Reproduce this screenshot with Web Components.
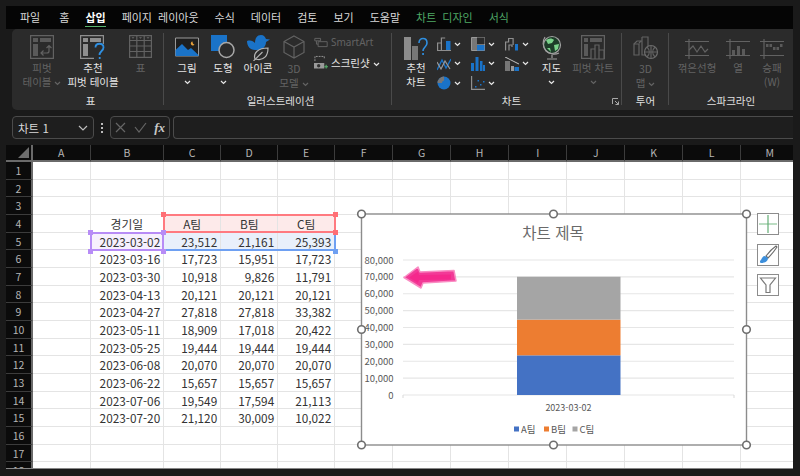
<!DOCTYPE html>
<html lang="ko">
<head>
<meta charset="utf-8">
<title>Excel</title>
<style>
  html, body { margin: 0; height: 100%; background: #1a1a1a; overflow: hidden; }
  body { font-family: "Noto Sans CJK KR", "Noto Sans", sans-serif; padding-top: 6px; box-sizing: border-box; }
  svg { display: block; }
  .g { fill: none; stroke: #8f8f8f; stroke-width: 1.2; }
  .d { fill: none; stroke: #626262; stroke-width: 1.2; }
  .df { fill: #5a5a5a; }
  .gf { fill: #8f8f8f; }
  .b { fill: #1a73c8; }
</style>
</head>
<body>

<template id="tab-tpl">
  <style>
    :host { display: block; padding: 0 8px; height: 23px; position: relative; font-size: 11px; word-spacing: 3px; line-height: 22px; color: #d9d9d9; white-space: nowrap; }
    :host([active]) { color: #fff; font-weight: 700; }
    :host([active])::after { content: ""; position: absolute; left: 8px; right: 8px; bottom: 2px; height: 1.5px; background: #57b26c; }
    :host([context]) { color: #4fa866; }
  </style>
  <slot></slot>
</template>

<template id="menubar-tpl">
  <style>
    :host { display: flex; background: #050505; height: 23px; margin: 0 7px 0 6px; padding-left: 6px; }
  </style>
  <slot></slot>
</template>

<template id="ribbon-tpl">
  <style>
    :host { display: flex; height: 81px; margin: 0 7px 0 12px; background: #2b2b2b; border-radius: 5px 0 0 5px; overflow: hidden; }
  </style>
  <slot></slot>
</template>

<template id="group-tpl">
  <style>
    :host { display: block; position: relative; flex: none; box-sizing: border-box; }
    :host::after { content: ""; position: absolute; right: 0; top: 4px; bottom: 5px; width: 1px; background: #4a4a4a; }
    :host([last])::after { display: none; }
    .tools { display: flex; height: 65px; padding-top: 6px; box-sizing: border-box; }
    .label { text-align: center; font-size: 10.5px; line-height: 14px; color: #e0e0e0; height: 16px; }
    .launcher { position: absolute; right: 3px; bottom: 4px; }
  </style>
  <div class="tools"><slot></slot></div>
  <div class="label"></div>
  <slot name="launcher"></slot>
</template>

<template id="tool-tpl">
  <style>
    :host { display: flex; flex-direction: column; align-items: center; flex: none; font-size: 10.5px; line-height: 14px; color: #e6e6e6; text-align: center; white-space: nowrap; }
    :host([off]) { color: #636363; }
    .icon { height: 26px; display: flex; align-items: flex-start; justify-content: center; }
  </style>
  <div class="icon"><slot name="icon"></slot></div>
  <slot></slot>
</template>

<template id="mini-tpl">
  <style>
    :host { display: flex; align-items: center; gap: 3px; height: 20px; font-size: 10.5px; white-space: nowrap; color: #e6e6e6; }
    :host([off]) { color: #636363; }
  </style>
  <slot></slot>
</template>

<template id="formula-tpl">
  <style>
    :host { display: flex; align-items: center; height: 23px; margin: 6px 7px 6px 12px; color: #d9d9d9; }
    .box { box-sizing: border-box; height: 23px; background: #1e1e1e; border: 1px solid #4b4b4b; border-radius: 4px; display: flex; align-items: center; }
    .name { width: 82px; padding: 0 5px 0 5px; justify-content: space-between; font-size: 11.5px; }
    .dots { width: 16px; display: flex; flex-direction: column; align-items: center; gap: 2px; }
    .dots i { width: 2px; height: 2px; background: #bbb; display: block; }
    .btns { width: 60px; padding: 0 4px; justify-content: space-between; }
    .input { flex: 1; margin-left: 3px; border-radius: 4px 0 0 4px; border-right: 0; }
    .fx { font: italic 700 13px "Liberation Serif", serif; color: #c8c8c8; }
  </style>
  <div class="box name"><span>차트 1</span>
    <svg width="10" height="6" viewBox="0 0 10 6"><path d="M1 1l4 4 4-4" fill="none" stroke="#bdbdbd" stroke-width="1.2"/></svg>
  </div>
  <div class="dots"><i></i><i></i><i></i></div>
  <div class="box btns">
    <svg width="11" height="11" viewBox="0 0 11 11"><path d="M1 1l9 9M10 1l-9 9" stroke="#666" stroke-width="1.2"/></svg>
    <svg width="13" height="11" viewBox="0 0 13 11"><path d="M1 5l4 5 7-9" fill="none" stroke="#666" stroke-width="1.2"/></svg>
    <span class="fx">fx</span>
  </div>
  <div class="box input"></div>
</template>

<template id="sheet-tpl">
  <style>
    :host { display: block; position: relative; margin-left: 6px; width: 787px; height: 324px; background: #fff; overflow: hidden; font-size: 11.8px; color: #333; }
    .grid { display: grid; grid-template-columns: 27px 57.6px 73.6px 57px 57px 57px 58px 58px 58px 58px 58px 58px 58px 58px; grid-template-rows: 17px repeat(18, 17.67px); }
    .c { box-sizing: border-box; border-right: 1px solid #e4e4e4; border-bottom: 1px solid #e4e4e4; line-height: 17px; white-space: nowrap; overflow: hidden; }
    .num { text-align: right; padding-right: 3px; }
    .mid { text-align: center; }
    .ch, .rh { background: #0b0b0b; color: #b5b5b5; font-size: 10.5px; text-align: center; box-sizing: border-box; }
    .ch { line-height: 15px; border-right: 1px solid #3c3c3c; border-bottom: 2px solid #6a6a6a; }
    .rh { line-height: 17px; border-bottom: 1px solid #3c3c3c; border-right: 2px solid #6a6a6a; }
    .corner { background: #0b0b0b; border-bottom: 2px solid #6a6a6a; border-right: 2px solid #6a6a6a; box-sizing: border-box; position: relative; }
    .corner::after { content: ""; position: absolute; right: 2px; bottom: 2px; border-style: solid; border-width: 0 0 11px 11px; border-color: transparent transparent #6e6e6e transparent; }
    .red { background: #fdeaea; }
    .blue { background: #e9f0fb; }
    .purple { background: #f6f0fd; }
    .sel { position: absolute; box-sizing: border-box; pointer-events: none; }
    .h { position: absolute; width: 5px; height: 5px; }
    .bottom-edge { position: absolute; left: 0; right: 0; bottom: 0; height: 1px; background: #888; }
  </style>
  <div class="grid"></div>
  <div class="sel" style="left:157px;top:69px;width:173px;height:19px;border:2px solid #ff7a80"></div>
  <div class="sel" style="left:157px;top:87.5px;width:173px;height:18.5px;border-right:2px solid #6ea0f2;border-bottom:2px solid #6ea0f2"></div>
  <div class="sel" style="left:84px;top:87px;width:74px;height:19px;border:2px solid #b78cf6"></div>
  <div class="h" style="left:155px;top:67px;background:#ff6f75"></div>
  <div class="h" style="left:327px;top:67px;background:#ff6f75"></div>
  <div class="h" style="left:327px;top:85px;background:#ff6f75"></div>
  <div class="h" style="left:327px;top:103.5px;background:#6ea0f2"></div>
  <div class="h" style="left:82px;top:85px;background:#b78cf6"></div>
  <div class="h" style="left:155px;top:85px;background:#b78cf6"></div>
  <div class="h" style="left:82px;top:103.5px;background:#b78cf6"></div>
  <div class="h" style="left:155px;top:103.5px;background:#b78cf6"></div>
  <slot></slot>
  <div class="bottom-edge"></div>
</template>

<template id="chart-tpl">
  <style>
    :host { display: block; position: absolute; left: 346px; top: 61px; width: 430px; height: 245px; }
    .side { position: absolute; left: 405px; width: 22px; height: 22px; box-sizing: border-box; background: #fff; border: 1.5px solid #8c8c8c; display: flex; align-items: center; justify-content: center; }
    text { font-family: "Noto Sans CJK KR", "Noto Sans", sans-serif; }
  </style>
  <svg width="400" height="245" viewBox="352 206 400 245" style="position:absolute;left:0;top:0"></svg>
  <div class="side" style="top:7px"><svg width="18" height="18" viewBox="0 0 18 18"><path d="M0 9h18" stroke="#8fc79b" stroke-width="1.2"/><path d="M9 0v18" stroke="#63ad75" stroke-width="1.2"/></svg></div>
  <div class="side" style="top:38px"><svg width="20" height="20" viewBox="0 0 20 20"><path d="M18 1c-3 2-7 6-10 10l2 2c3-3 7-8 9-11z" fill="#fff" stroke="#6b6b6b" stroke-width="1.1"/><path d="M7 11c-3 0-3 3-5 5 0 1 0 2 1 2 3 0 7-1 7-5z" fill="#3c8fdc"/></svg></div>
  <div class="side" style="top:68px"><svg width="18" height="18" viewBox="0 0 18 18"><path d="M1.5 2h15l-5.500 7v7.500h-4V9z" fill="#fff" stroke="#7a7a7a" stroke-width="1.2"/></svg></div>
</template>

<svg width="0" height="0" style="position:absolute">
  <defs>
    <symbol id="chev" viewBox="0 0 7 5"><path d="M1 1l2.500 2.500L6 1" fill="none" stroke="currentColor" stroke-width="1.200"/></symbol>
  </defs>
</svg>

<xl-menubar>
  <xl-tab>파일</xl-tab><xl-tab style="margin-left:3px">홈</xl-tab><xl-tab active>삽입</xl-tab><xl-tab>페이지 레이아웃</xl-tab><xl-tab>수식</xl-tab><xl-tab>데이터</xl-tab><xl-tab>검토</xl-tab><xl-tab>보기</xl-tab><xl-tab>도움말</xl-tab><xl-tab context>차트 디자인</xl-tab><xl-tab context>서식</xl-tab>
</xl-menubar>

<xl-ribbon>
  <xl-group label="표" style="width:152px;padding-left:5px">
    <xl-tool off style="width:50px">
      <svg slot="icon" width="24" height="24" viewBox="0 0 24 24"><path class="d" d="M.6.6h22.800v22.800H.6z"/><path class="df" d="M3 3h5v4H3zM10 3h11v4H10zM3 9h5v12H3z"/><path class="d" d="M11 18h6a2 2 0 0 0 2-2v-5M16.500 13l2.500-2.500 2.500 2.500M13.500 15.500L11 18l2.500 2.500"/></svg>
      <span>피벗</span><span>테이블 <svg width="7" height="5" style="display:inline"><use href="#chev"/></svg></span>
    </xl-tool>
    <xl-tool style="width:52px">
      <svg slot="icon" width="26" height="26" viewBox="0 0 26 26"><path class="g" d="M.6.6h22.800v22.800H.6z"/><path class="gf" d="M3 3h5v4H3zM10 3h11v4H10zM3 9h5v12H3z"/><path fill="#2b2b2b" d="M14 9h12v17H14z"/><path d="M15.500 12.500c0-5 8-5 8 0 0 3.500-4 3.500-4 7.500" fill="none" stroke="#2f8fe0" stroke-width="1.800"/><path d="M18.800 22h1.800v2h-1.800z" fill="#2f8fe0"/></svg>
      <span>추천</span><span>피벗 테이블</span>
    </xl-tool>
    <xl-tool off style="width:43px">
      <svg slot="icon" width="23" height="23" viewBox="0 0 23 23"><path class="d" d="M.6.6h21.800v21.800H.6zM.6 5.500h21.800M.6 11h21.800M.6 16.500h21.800M7.800.6v21.800M15.200.6v21.800"/><path class="df" d="M2.500 2h3l-1.500 2zM10 2h3l-1.500 2zM17.500 2h3L19 4z"/></svg>
      <span>표</span>
    </xl-tool>
  </xl-group>

  <xl-group label="일러스트레이션" style="width:228px;padding-left:5px">
    <xl-tool style="width:36px">
      <svg slot="icon" width="24" height="22" viewBox="0 0 24 22" style="margin-top:2px"><path d="M.5 1h23v18H.5z" fill="#1e1e1e" stroke="#9a9a9a"/><path d="M.5 19V13L7 7l6 6 3-2 7.500 7v1z" fill="#1a73c8"/><path d="M17.500 4.500a2 2 0 1 0 2 3c-1 .1-2-1-2-3z" fill="#e8a13a"/></svg>
      <span>그림</span><svg width="7" height="5" style="margin-top:5px"><use href="#chev"/></svg>
    </xl-tool>
    <xl-tool style="width:36px">
      <svg slot="icon" width="24" height="24" viewBox="0 0 24 24"><path d="M0 0h16v16H0z" fill="#1a73c8"/><circle cx="15.500" cy="15" r="7.500" fill="#2b2b2b" stroke="#a8a8a8" stroke-width="1.500"/></svg>
      <span>도형</span><svg width="7" height="5" style="margin-top:5px"><use href="#chev"/></svg>
    </xl-tool>
    <xl-tool style="width:34px">
      <svg slot="icon" width="23" height="26" viewBox="0 0 23 26"><path d="M0 6c4-1 6 0 8 2 0-5 2-8 6-8 3 0 4 2 5 4l4 .5-4 2.500c0 4-3 8-8 8H8C3 15 0 11 0 6z" fill="#1a73c8"/><path d="M8 24c-2-6 3-11 13-11 0 8-4 12-10 11.500L8 24z" fill="#2b2b2b" stroke="#b5b5b5" stroke-width="1.200"/><path d="M6.500 26l9-9" stroke="#b5b5b5" stroke-width="1.100"/></svg>
      <span>아이콘</span>
    </xl-tool>
    <xl-tool off style="width:38px">
      <svg slot="icon" width="22" height="24" viewBox="0 0 22 24"><path class="d" d="M11 1l10 5.500v11L11 23 1 17.500v-11zM1 6.500L11 12l10-5.500M11 12v11"/></svg>
      <span style="margin-top:1px">3D</span><span>모델 <svg width="7" height="5" style="display:inline"><use href="#chev"/></svg></span>
    </xl-tool>
    <div style="padding-left:1px;margin-top:-3px">
      <xl-mini off>
        <svg width="14" height="11" viewBox="0 0 17 12"><path class="d" d="M5 5h11v6H5zM1 1h7v3H1zM3 4v4h2"/></svg>
        <span style="font-family:'Noto Sans',sans-serif;font-size:10px">SmartArt</span>
      </xl-mini>
      <xl-mini>
        <svg width="14" height="15" viewBox="0 0 15 15"><path d="M1 6V1h10v3" fill="none" stroke="#9a9a9a" stroke-dasharray="2 1"/><path d="M0 8h11v6H0z" fill="#9a9a9a"/><circle cx="5" cy="11" r="1.800" fill="#333"/><path d="M11 12h4M13 10v4" stroke="#57b26c" stroke-width="1.200"/></svg>
        <span>스크린샷 <svg width="7" height="5" style="display:inline"><use href="#chev"/></svg></span>
      </xl-mini>
    </div>
  </xl-group>

  <xl-group label="차트" style="width:230px;padding-left:9px">
    <xl-tool style="width:30px">
      <svg slot="icon" width="24" height="25" viewBox="0 0 24 25"><path d="M0 2h7v23H0z" fill="#8c8c8c"/><path d="M8 11h6v14H8z" fill="#777"/><path d="M15 7c0-6 8-6 8 0 0 4-4 4-4 8" fill="none" stroke="#2f8fe0" stroke-width="1.600" transform="translate(0 1)"/><path d="M18.200 18h1.700v2h-1.700z" fill="#2f8fe0"/></svg>
      <span>추천</span><span>차트</span>
    </xl-tool>
    <div style="display:grid;grid-template-columns:34px 34px 30px;grid-auto-rows:19.500px;width:98px;padding-left:6px;margin-top:-1px;color:#d0d0d0">
      <xl-mini><svg width="14" height="14" viewBox="0 0 14 14"><path class="g" d="M.6 13.400V6h3.800v7.400M4.400 13.400V1h3.800"/><path d="M9 4h4.500v9.500H9z" fill="#1a73c8"/><path class="g" d="M0 13.500h14"/></svg><svg width="7" height="5"><use href="#chev"/></svg></xl-mini>
      <xl-mini><svg width="14" height="14" viewBox="0 0 14 14"><path d="M.5.500h13v13H.5z" fill="#777" stroke="#999"/><path d="M6 .5h7.500V7H6z" fill="#2b2b2b"/><path d="M6 8h7.500v5.500H6z" fill="#1a73c8"/></svg><svg width="7" height="5"><use href="#chev"/></svg></xl-mini>
      <xl-mini><svg width="14" height="14" viewBox="0 0 14 14"><path class="g" d="M.6 13.500V5h3V1.500h4.500V8"/><path d="M10 7h3v6.500h-3z" fill="#1a73c8"/><path class="g" d="M4 13.500V8h3v2"/></svg><svg width="7" height="5"><use href="#chev"/></svg></xl-mini>
      <xl-mini><svg width="14" height="14" viewBox="0 0 14 14"><path d="M0 13L5 3l4 8 5-9" fill="none" stroke="#1a73c8" stroke-width="1.400"/><path d="M0 5l4 7 4-8 5 8" fill="none" stroke="#999" stroke-width="1.200"/></svg><svg width="7" height="5"><use href="#chev"/></svg></xl-mini>
      <xl-mini><svg width="14" height="15" viewBox="0 0 14 15"><path d="M0 7h3v8H0zM4.500 1h3v14h-3zM9 5h2.500v10H9zM12 9h2v6h-2z" fill="#1a73c8"/></svg><svg width="7" height="5"><use href="#chev"/></svg></xl-mini>
      <xl-mini><svg width="14" height="14" viewBox="0 0 14 14"><path d="M0 4h5v10H0z" fill="#777"/><path d="M6 9h3v5H6z" fill="#999"/><path d="M9.500 10H14v4H9.500z" fill="#1a73c8"/><path d="M0 0l14 7" stroke="#bbb" stroke-width="1.100"/></svg><svg width="7" height="5"><use href="#chev"/></svg></xl-mini>
      <xl-mini><svg width="14" height="14" viewBox="0 0 14 14"><circle cx="7" cy="7" r="6.500" fill="#1a73c8"/><path d="M7 7V.5A6.500 6.500 0 0 0 .5 7z" fill="#777"/><circle cx="7.500" cy="7" r="2.500" fill="#1a73c8"/></svg><svg width="7" height="5"><use href="#chev"/></svg></xl-mini>
      <xl-mini><svg width="14" height="14" viewBox="0 0 14 14"><path class="g" d="M.6 0v13.400H14"/><path d="M4 10h1.500v1.500H4zM6.500 4H8v1.500H6.500zM9 8h1.500v1.500H9zM12 5h1.500v1.500H12z" fill="#1a73c8"/></svg><svg width="7" height="5"><use href="#chev"/></svg></xl-mini>
    </div>
    <xl-tool style="width:35px;margin-left:-1px">
      <svg slot="icon" width="22" height="25" viewBox="0 0 22 25"><circle cx="11" cy="10" r="8.500" fill="#1d3d29" stroke="#a0a0a0" stroke-width="1.200"/><path d="M5 5c3-2 6-2 8 0l-2 3-4 1zM13 10l5-1-1 5-3 2zM6 13l3 0 1 4z" fill="#7bd38b"/><path d="M4 2a11 11 0 0 0 14 16M11 20v3M6 24h10" fill="none" stroke="#a0a0a0" stroke-width="1.200"/></svg>
      <span>지도</span><svg width="7" height="5" style="margin-top:5px"><use href="#chev"/></svg>
    </xl-tool>
    <xl-tool off style="width:48px">
      <svg slot="icon" width="25" height="25" viewBox="0 0 25 25"><path class="d" d="M.6.600h22.800v22.800H.6z"/><path class="df" d="M3 3h4v4H3zM9 3h12v4H9zM3 9h4v12H3z"/><path d="M10 14h4v10h-4zM14 10h4v14h-4zM18 15h5v9h-5z" fill="#2b2b2b" stroke="#626262" stroke-width="1.200"/></svg>
      <span>피벗 차트</span><svg width="7" height="5" style="margin-top:5px"><use href="#chev"/></svg>
    </xl-tool>
    <svg slot="launcher" class="launcher" width="7" height="7" viewBox="0 0 7 7" style="position:absolute;right:3px;bottom:5px"><path d="M.5 6V.500H6M3 3l3.500 3.500M6.500 3.500v3h-3" fill="none" stroke="#a8a8a8"/></svg>
  </xl-group>

  <xl-group label="투어" style="width:47px">
    <xl-tool off style="width:47px">
      <svg slot="icon" width="26" height="25" viewBox="0 0 26 25"><path class="d" d="M1 9h5v11H1zM6 8l2-2M9 2h6v13M9 2v18h3"/><path d="M6 6h3M1 9l3-3h3" class="d"/><circle cx="18" cy="17" r="6.500" fill="#2b2b2b" stroke="#6e6e6e" stroke-width="1.200"/><path class="d" d="M11.500 17h13M18 10.500v13M14 12c3 3 3 7 0 10M22 12c-3 3-3 7 0 10"/></svg>
      <span style="margin-top:1px">3D</span><span>맵 <svg width="7" height="5" style="display:inline"><use href="#chev"/></svg></span>
    </xl-tool>
  </xl-group>

  <xl-group label="스파크라인" last style="flex:1">
    <xl-tool off style="width:56px">
      <svg slot="icon" width="24" height="20" viewBox="0 0 24 20" style="margin-top:4px"><path class="d" d="M0 2.500h24M0 16.500h24M4 0v20"/><path class="d" d="M4 11l4-4 4 6 4-6 4 6 3-3"/></svg>
      <span>꺾은선형</span>
    </xl-tool>
    <xl-tool off style="width:26px">
      <svg slot="icon" width="24" height="20" viewBox="0 0 24 20" style="margin-top:4px"><path class="d" d="M0 2.500h24M0 16.500h24M4 0v20"/><path class="df" d="M6 11h3v5H6zM11 7h3v9h-3zM16 10h3v6h-3z"/></svg>
      <span>열</span>
    </xl-tool>
    <xl-tool off style="width:42px">
      <svg slot="icon" width="24" height="20" viewBox="0 0 24 20" style="margin-top:4px"><path class="d" d="M0 2.500h24M0 16.500h24M4 0v20"/><path class="df" d="M6 5h2.500v3H6zM9.500 5H12v3H9.500zM13 8h2.500v3H13zM16.500 8H19v3h-2.500zM20 5h2.500v3H20z"/></svg>
      <span>승패</span><span>(W)</span>
    </xl-tool>
  </xl-group>
</xl-ribbon>

<xl-formula></xl-formula>

<xl-sheet>
  <xl-chart></xl-chart>
</xl-sheet>

<script>
class Base extends HTMLElement {
  constructor(tplId) {
    super();
    this.attachShadow({ mode: 'open' });
    this.shadowRoot.appendChild(document.getElementById(tplId).content.cloneNode(true));
  }
}

customElements.define('xl-tab', class extends Base { constructor() { super('tab-tpl'); } });
customElements.define('xl-menubar', class extends Base { constructor() { super('menubar-tpl'); } });
customElements.define('xl-ribbon', class extends Base { constructor() { super('ribbon-tpl'); } });
customElements.define('xl-tool', class extends Base { constructor() { super('tool-tpl'); } });
customElements.define('xl-mini', class extends Base { constructor() { super('mini-tpl'); } });
customElements.define('xl-formula', class extends Base { constructor() { super('formula-tpl'); } });

customElements.define('xl-group', class extends Base {
  constructor() { super('group-tpl'); }
  connectedCallback() {
    this.shadowRoot.querySelector('.label').textContent = this.getAttribute('label') || '';
  }
});

customElements.define('xl-sheet', class extends Base {
  constructor() { super('sheet-tpl'); }
  connectedCallback() {
    const cols = ['A','B','C','D','E','F','G','H','I','J','K','L','M'];
    const rows = {
      4: ['경기일','A팀','B팀','C팀'],
      5: ['2023-03-02','23,512','21,161','25,393'],
      6: ['2023-03-16','17,723','15,951','17,723'],
      7: ['2023-03-30','10,918','9,826','11,791'],
      8: ['2023-04-13','20,121','20,121','20,121'],
      9: ['2023-04-27','27,818','27,818','33,382'],
      10: ['2023-05-11','18,909','17,018','20,422'],
      11: ['2023-05-25','19,444','19,444','19,444'],
      12: ['2023-06-08','20,070','20,070','20,070'],
      13: ['2023-06-22','15,657','15,657','15,657'],
      14: ['2023-07-06','19,549','17,594','21,113'],
      15: ['2023-07-20','21,120','30,009','10,022']
    };
    let html = '<div class="corner"></div>';
    cols.forEach(c => { html += `<div class="ch">${c}</div>`; });
    for (let r = 1; r <= 18; r++) {
      html += `<div class="rh">${r}</div>`;
      cols.forEach((c, i) => {
        let cls = 'c';
        let text = '';
        const row = rows[r];
        if (row && i >= 1 && i <= 4) {
          text = row[i - 1];
          cls += r === 4 ? ' mid' : ' num';
          if (r === 4 && i > 1) cls += ' red';
          if (r === 5) cls += i === 1 ? ' purple' : ' blue';
        }
        html += `<div class="${cls}">${text}</div>`;
      });
    }
    this.shadowRoot.querySelector('.grid').innerHTML = html;
  }
});

customElements.define('xl-chart', class extends Base {
  constructor() { super('chart-tpl'); }
  connectedCallback() {
    // y for a value on the axis, 0 at 395 and 80,000 at 260
    const y = v => 395 - v * 135 / 80000;
    let s = '<rect x="361.500" y="214" width="385" height="231" fill="#fff" stroke="#8c8c8c" stroke-width="1.400"/>';
    s += '<text x="553" y="239" text-anchor="middle" font-size="15.500" fill="#6a6a6a">차트 제목</text>';
    for (let v = 0; v <= 80000; v += 10000) {
      const yy = y(v);
      s += `<line x1="403" x2="734" y1="${yy}" y2="${yy}" stroke="#e6e6e6" stroke-width="1.200"/>`;
      s += `<text x="393.500" y="${yy + 3.500}" text-anchor="end" font-size="9.500" fill="#595959">${v.toLocaleString('en-US')}</text>`;
    }
    s += '<path d="M403 395v3M734 395v3" stroke="#d9d9d9"/>';
    s += `<rect x="517" y="${y(23512)}" width="103.500" height="${y(0) - y(23512)}" fill="#4472c4"/>`;
    s += `<rect x="517" y="${y(44673)}" width="103.500" height="${y(23512) - y(44673)}" fill="#ed7d31"/>`;
    s += `<rect x="517" y="${y(70066)}" width="103.500" height="${y(44673) - y(70066)}" fill="#a5a5a5"/>`;
    s += '<text x="568.500" y="410.500" text-anchor="middle" font-size="9" fill="#595959">2023-03-02</text>';
    const legend = [[514, '#4472c4', 'A팀'], [544, '#ed7d31', 'B팀'], [572.500, '#a5a5a5', 'C팀']];
    legend.forEach(([x, color, name]) => {
      s += `<rect x="${x}" y="426.500" width="5" height="5" fill="${color}"/>`;
      s += `<text x="${x + 7}" y="433" font-size="9.500" fill="#595959">${name}</text>`;
    });
    [[361.5, 214], [553.5, 214], [746.5, 214], [361.5, 329.5], [746.5, 329.5], [361.5, 445], [553.5, 445], [746.5, 445]].forEach(([x, yy]) => {
      s += `<circle cx="${x}" cy="${yy}" r="3.800" fill="#fff" stroke="#6e6e6e" stroke-width="1.600"/>`;
    });
    // hand drawn pink arrow
    s += '<path d="M404 277.500L418 267l2 5 34-1.500 2 10.500-33 2 -2 5z" fill="#f23a97" stroke="#f98dc3" stroke-width="1.500" stroke-linejoin="round"/>';
    s += '<path d="M409 277.500l9-6 1 3.500 32-.5v5l-32 .5-1 3z" fill="#f5288c"/>';
    this.shadowRoot.querySelector('svg').innerHTML = s;
  }
});
</script>
</body>
</html>
